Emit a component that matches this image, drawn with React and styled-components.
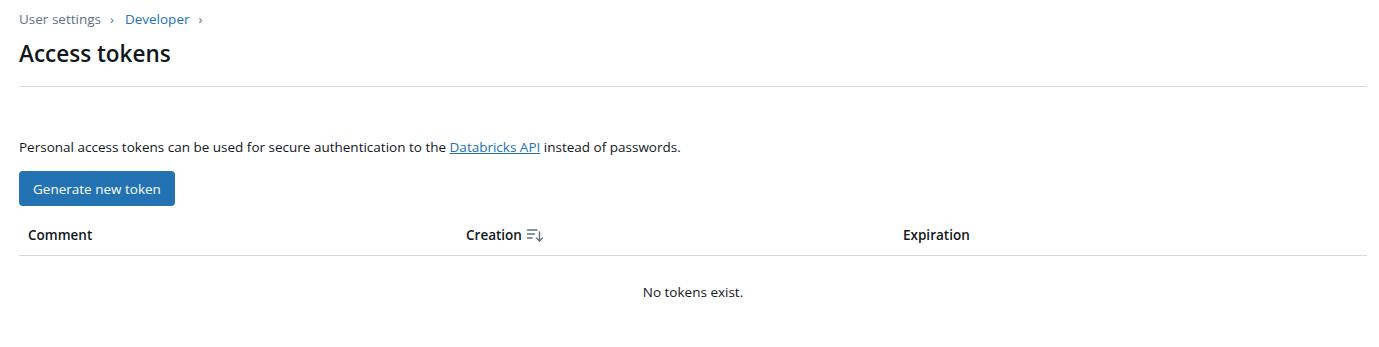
import React from "react";
import styled, { createGlobalStyle } from "styled-components";

const GlobalStyle = createGlobalStyle`
  body {
    margin: 0;
    background: #ffffff;
    font-family: "Segoe UI", "Open Sans", "Noto Sans", sans-serif;
    color: #11171c;
  }
`;

const Page = styled.div`
  padding: 10px 12px 0 19px;
`;

const Breadcrumbs = styled.nav`
  display: flex;
  align-items: center;
  gap: 9px;
  font-size: 13.5px;
  line-height: 18px;
  color: #5f7281;
`;

const Crumb = styled.span`
  color: ${(p) => (p.$link ? "#2272b4" : "#5f7281")};
`;

const Chevron = styled.span`
  font-size: 13px;
  color: #5f7281;
  margin-right: 2px;
`;

const Title = styled.h1`
  margin: 12px 0 0;
  font-size: 22.5px;
  line-height: 28px;
  font-weight: 600;
  color: #11171c;
`;

const Divider = styled.hr`
  border: none;
  border-top: 1px solid #d1d9e1;
  margin: 18px 0 0;
`;

const Intro = styled.p`
  margin: 50px 0 0;
  font-size: 13.5px;
  line-height: 20px;
`;

const Link = styled.a`
  color: #2272b4;
  text-decoration: underline;
  cursor: pointer;
`;

const Button = styled.button`
  margin-top: 14px;
  height: 35px;
  padding: 0 14px;
  border: none;
  border-radius: 4px;
  background: #2272b4;
  color: #ffffff;
  font-family: inherit;
  font-size: 13.5px;
  cursor: pointer;
`;

const Table = styled.div`
  margin-top: 10px;
`;

const HeaderRow = styled.div`
  display: grid;
  grid-template-columns: 438px 437px 1fr;
  box-sizing: border-box;
  height: 40px;
  padding-top: 9.5px;
  align-items: start;
  border-bottom: 1px solid #d1d9e1;
`;

const HeadCell = styled.div`
  display: flex;
  align-items: center;
  gap: 4px;
  padding: 0 9px;
  font-size: 13.5px;
  line-height: 18px;
  font-weight: 600;
`;

const Empty = styled.div`
  text-align: center;
  padding: 27px 0;
  font-size: 13.5px;
  line-height: 18px;
`;

const SortIcon = () => (
  <svg width="18" height="16" viewBox="0 0 18 16" fill="none">
    <g stroke="#5f7281" strokeWidth="1.4" strokeLinecap="round">
      <line x1="1.5" y1="3" x2="11" y2="3" />
      <line x1="1.5" y1="7" x2="8.5" y2="7" />
      <line x1="1.5" y1="11" x2="6" y2="11" />
      <line x1="13.5" y1="5" x2="13.5" y2="14" />
      <polyline points="10.5,11 13.5,14 16.5,11" strokeLinejoin="round" />
    </g>
  </svg>
);

export default function App() {
  return (
    <Page>
      <GlobalStyle />
      <Breadcrumbs>
        <Crumb>User settings</Crumb>
        <Chevron>›</Chevron>
        <Crumb $link>Developer</Crumb>
        <Chevron>›</Chevron>
      </Breadcrumbs>
      <Title>Access tokens</Title>
      <Divider />
      <Intro>
        Personal access tokens can be used for secure authentication to the{" "}
        <Link>Databricks API</Link> instead of passwords.
      </Intro>
      <Button>Generate new token</Button>
      <Table>
        <HeaderRow>
          <HeadCell>Comment</HeadCell>
          <HeadCell>
            Creation <SortIcon />
          </HeadCell>
          <HeadCell>Expiration</HeadCell>
        </HeaderRow>
        <Empty>No tokens exist.</Empty>
      </Table>
    </Page>
  );
}
